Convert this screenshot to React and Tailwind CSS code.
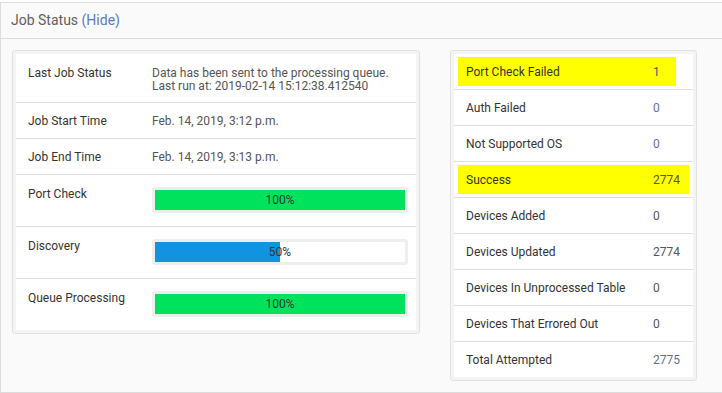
import React from "react";

const leftRows = [
  { label: "Last Job Status", value: ["Data has been sent to the processing queue.", "Last run at: 2019-02-14 15:12:38.412540"], pad: "pt-[13px] pb-[9px]" },
  { label: "Job Start Time", value: ["Feb. 14, 2019, 3:12 p.m."], pad: "pt-[12px] pb-[10px]" },
  { label: "Job End Time", value: ["Feb. 14, 2019, 3:13 p.m."], pad: "pt-[12px] pb-[10px]" },
];

const bars = [
  { label: "Port Check", pct: 100, color: "bg-[#00e25b]" },
  { label: "Discovery", pct: 50, color: "bg-[#1193e0]" },
  { label: "Queue Processing", pct: 100, color: "bg-[#00e25b]" },
];

const rightRows = [
  { label: "Port Check Failed", value: "1", hl: "w-[218px]" },
  { label: "Auth Failed", value: "0", blue: true },
  { label: "Not Supported OS", value: "0", blue: true },
  { label: "Success", value: "2774", hl: "w-[232px]" },
  { label: "Devices Added", value: "0" },
  { label: "Devices Updated", value: "2774" },
  { label: "Devices In Unprocessed Table", value: "0" },
  { label: "Devices That Errored Out", value: "0" },
  { label: "Total Attempted", value: "2775", blue: true },
];

function Card({ children, className }) {
  return (
    <div className={"rounded-[3px] border border-[#e2e2e2] bg-[#f4f4f4] p-[3px] " + className}>
      <div className="bg-white">{children}</div>
    </div>
  );
}

export default function App() {
  return (
    <div className="w-[722px] h-[393px] bg-white pt-[2px] text-[12px] text-[#333]" style={{ fontFamily: "Roboto, 'Liberation Sans', sans-serif" }}>
      <div className="w-[740px] h-[391px] border border-[#dcdcdc] bg-[#fafafa] flex flex-col">
        <div className="h-[36px] border-b border-[#dcdcdc] flex items-center pl-[10px] text-[14px] text-[#606060]">
          Job Status&nbsp;<span className="text-[#5b7bbd]">(Hide)</span>
        </div>
        <div className="flex items-start gap-[30px] pl-[11px] pt-[11px]">
          <Card className="w-[408px]">
            {leftRows.map((r, i) => (
              <div key={i} className={"flex border-b border-[#dedede] leading-[13px] " + r.pad}>
                <div className="w-[136px] pl-[12px] shrink-0">{r.label}</div>
                <div className="text-[#555]">
                  {r.value.map((v, j) => (
                    <div key={j}>{v}</div>
                  ))}
                </div>
              </div>
            ))}
            {bars.map((b, i) => (
              <div key={i} className={"flex pt-[12px] pb-[13px] leading-[13px] " + (i < bars.length - 1 ? "border-b border-[#dedede]" : "")}>
                <div className="w-[136px] pl-[12px] pt-[1px] shrink-0">{b.label}</div>
                <div className="relative w-[256px] h-[26px] rounded-[3px] border-[3px] border-[#eeeeee] bg-white">
                  <div className={"h-full " + b.color} style={{ width: b.pct + "%" }} />
                  <div className="absolute inset-0 flex items-center justify-center text-[#333]">{b.pct}%</div>
                </div>
              </div>
            ))}
          </Card>
          <Card className="w-[247px]">
            {rightRows.map((r, i) => (
              <div key={i} className={"flex items-center px-[4px] " + (i < rightRows.length - 1 ? "border-b border-[#dedede] h-[36px]" : "h-[35px]")}>
                <div className={"flex items-center h-[29px] " + (r.hl ? r.hl + " bg-[#ffff00]" : "w-full")}>
                  <div className="w-[195px] pl-[8px] shrink-0 text-[#333]">{r.label}</div>
                  <div className={r.blue ? "text-[#5f6f9f]" : "text-[#555]"}>{r.value}</div>
                </div>
              </div>
            ))}
          </Card>
        </div>
      </div>
    </div>
  );
}
